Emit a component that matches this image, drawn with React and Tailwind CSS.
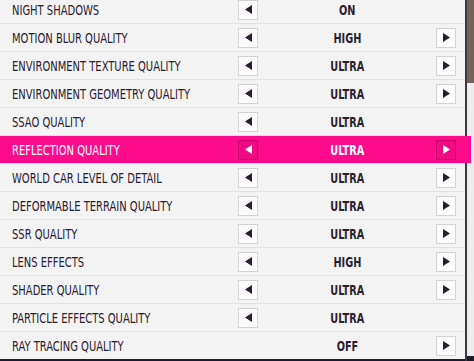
const rows = [
  { label: "NIGHT SHADOWS", value: "ON", left: true, right: false },
  { label: "MOTION BLUR QUALITY", value: "HIGH", left: true, right: true },
  { label: "ENVIRONMENT TEXTURE QUALITY", value: "ULTRA", left: true, right: true },
  { label: "ENVIRONMENT GEOMETRY QUALITY", value: "ULTRA", left: true, right: true },
  { label: "SSAO QUALITY", value: "ULTRA", left: true, right: false },
  { label: "REFLECTION QUALITY", value: "ULTRA", left: true, right: true, active: true },
  { label: "WORLD CAR LEVEL OF DETAIL", value: "ULTRA", left: true, right: true },
  { label: "DEFORMABLE TERRAIN QUALITY", value: "ULTRA", left: true, right: true },
  { label: "SSR QUALITY", value: "ULTRA", left: true, right: true },
  { label: "LENS EFFECTS", value: "HIGH", left: true, right: true },
  { label: "SHADER QUALITY", value: "ULTRA", left: true, right: true },
  { label: "PARTICLE EFFECTS QUALITY", value: "ULTRA", left: true, right: false },
  { label: "RAY TRACING QUALITY", value: "OFF", left: false, right: true },
];

const font = { fontFamily: '"Liberation Sans Narrow", "DejaVu Sans Condensed", "Liberation Sans", sans-serif' };

const Arrow = ({ dir, active }) => (
  <div
    className={
      "w-[20px] h-[20px] flex items-center justify-center border " +
      (active ? "bg-[#f10a84] border-[#c8046a]" : "bg-[#fbfbfb] border-[#d4d2d4]")
    }
  >
    <svg width="7" height="9" viewBox="0 0 7 9">
      {dir === "left" ? (
        <polygon points="7,0 7,9 0,4.5" fill={active ? "#ffffff" : "#2a1c33"} />
      ) : (
        <polygon points="0,0 0,9 7,4.5" fill={active ? "#ffffff" : "#2a1c33"} />
      )}
    </svg>
  </div>
);

const Row = ({ row }) => {
  const active = row.active;
  return (
    <div
      className={
        "h-[27px] flex items-center shrink-0 " +
        (active ? "bg-[#fe0b8b] mr-[-6px] relative z-10" : "bg-[#f4f3f4]")
      }
    >
      <div
        className={
          "w-[238px] pl-[12px] pt-[2px] text-[13.5px] font-medium whitespace-nowrap " +
          (active ? "text-white" : "text-[#28202e]")
        }
      >
        <span className="inline-block origin-left scale-x-[0.82]">{row.label}</span>
      </div>
      <div className="w-[20px]">{row.left && <Arrow dir="left" active={active} />}</div>
      <div
        className={
          "w-[178px] pt-[2px] text-center font-bold text-[13.5px] " +
          (active ? "text-white" : "text-[#2b1f33]")
        }
      >
        <span className="inline-block origin-center scale-x-[0.8]">{row.value}</span>
      </div>
      <div className="w-[20px]">{row.right && <Arrow dir="right" active={active} />}</div>
    </div>
  );
};

export default function App() {
  return (
    <div className="w-[474px] h-[361px] overflow-hidden bg-[#1c1a2c] flex" style={font}>
      <div className="w-[465px] flex flex-col">
        <div className="flex flex-col gap-px bg-[#e2e0e2] mt-[-4px]">
          {rows.map((r) => (
            <Row key={r.label} row={r} />
          ))}
        </div>
      </div>
      <div className="w-[2px] bg-[#3d3540]" />
      <div className="flex-1 flex flex-col h-[356px]">
        <div className="h-[83px] bg-[#6f635c]" />
        <div className="flex-1 bg-[#ececec]" />
      </div>
    </div>
  );
}
